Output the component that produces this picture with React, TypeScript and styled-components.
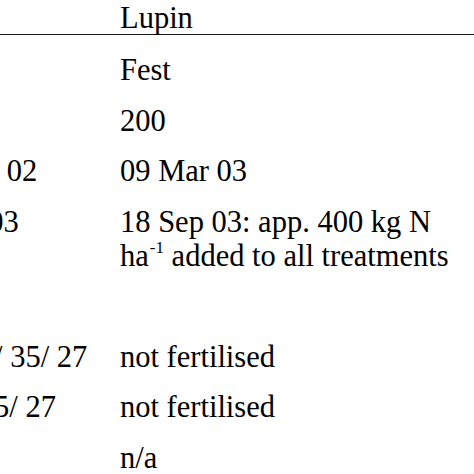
import styled, { createGlobalStyle } from "styled-components";

const GlobalStyle = createGlobalStyle`
  html, body {
    margin: 0;
    padding: 0;
    background: #fff;
  }
  body {
    overflow: hidden;
  }
`;

/* styled */
const Page = styled.div`
  width: 474px;
  height: 474px;
  overflow: hidden;
  background: #fff;
`;

// the table is a crop: first column runs off the left edge
const Table = styled.table`
  margin-left: -83px;
  width: 557px;
  border-collapse: collapse;
  table-layout: fixed;
  font-family: "Liberation Serif", "Times New Roman", serif;
  font-size: 30.5px;
  color: #000;
`;

const LeftCol = styled.col`
  width: 203px;
`;

const HeadCell = styled.th`
  padding: 2px 0 0;
  line-height: 32px;
  font-weight: 400;
  text-align: left;
  white-space: nowrap;
  border-bottom: 1px solid #1a1a1a;
`;

const BodyRow = styled.tr`
  &:first-child td {
    padding-top: 18px;
  }
`;

const Cell = styled.td`
  padding: 16.5px 0 0;
  line-height: 34px;
  text-align: left;
  vertical-align: top;
  white-space: nowrap;
`;

const Sup = styled.sup`
  font-size: 17px;
  line-height: 0;
  vertical-align: 13px;
  margin-left: 1px;
`;

type Row = {
  site: string;
  lupin: React.ReactNode;
};

const rows: Row[] = [
  { site: "", lupin: "Fest" },
  { site: "", lupin: "200" },
  { site: "15 Oct 02", lupin: "09 Mar 03" },
  {
    site: "9 Jan 03",
    lupin: (
      <>
        18 Sep 03: app. 400 kg N
        <br />
        ha<Sup>-1</Sup> added to all treatments
      </>
    ),
  },
  { site: "", lupin: "\u00a0" },
  { site: "80/ 50/ 35/ 27", lupin: "not fertilised" },
  { site: "120/ 35/ 27", lupin: "not fertilised" },
  { site: "", lupin: "n/a" },
];

export default function App() {
  return (
    <>
      <GlobalStyle />
      <Page>
        <Table>
          <colgroup>
            <LeftCol />
            <col />
          </colgroup>
          <thead>
            <tr>
              <HeadCell />
              <HeadCell>Lupin</HeadCell>
            </tr>
          </thead>
          <tbody>
            {rows.map((r, i) => (
              <BodyRow key={i}>
                <Cell>{r.site}</Cell>
                <Cell>{r.lupin}</Cell>
              </BodyRow>
            ))}
          </tbody>
        </Table>
      </Page>
    </>
  );
}
